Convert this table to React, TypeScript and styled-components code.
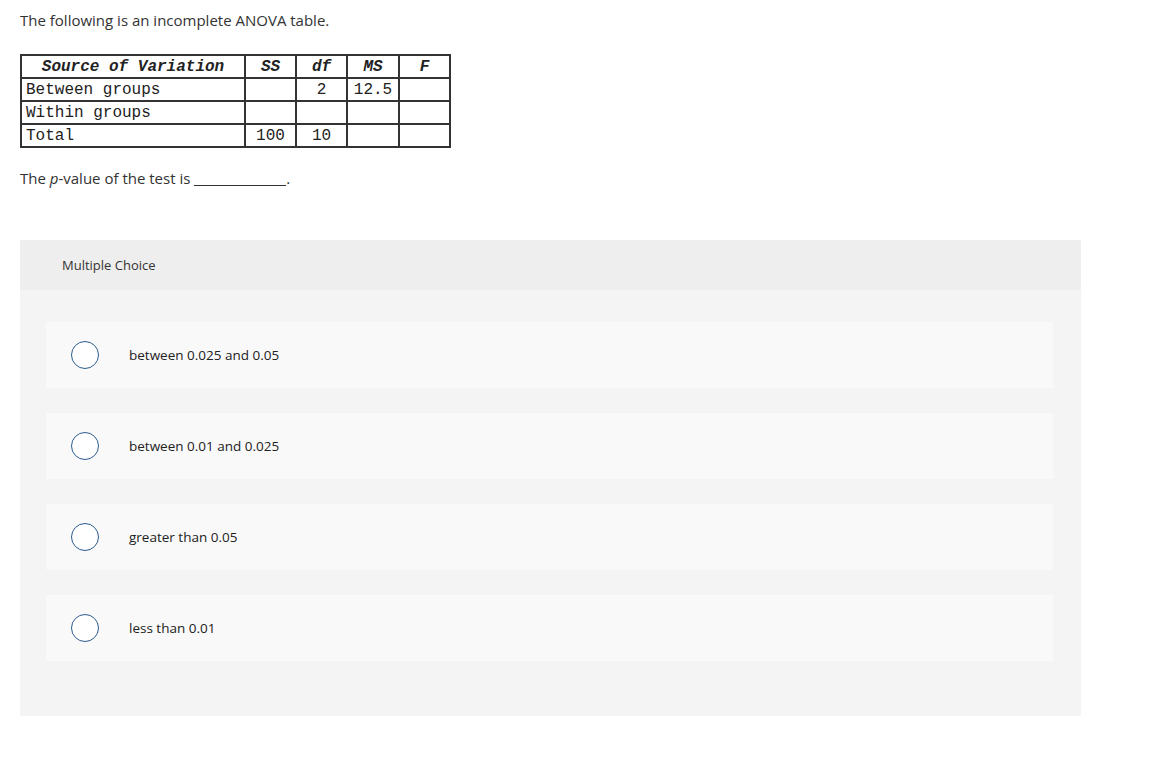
import { createGlobalStyle, styled } from "styled-components";

const GlobalStyle = createGlobalStyle`
    body {
        margin: 0;
        background: #ffffff;
        font-family: "Open Sans", Lato, sans-serif;
        color: #333333;
    }
`

const rows = [
    { source: "Between groups", ss: "", df: "2", ms: "12.5", f: "" },
    { source: "Within groups", ss: "", df: "", ms: "", f: "" },
    { source: "Total", ss: "100", df: "10", ms: "", f: "" },
]

const choices = [
    "between 0.025 and 0.05",
    "between 0.01 and 0.025",
    "greater than 0.05",
    "less than 0.01",
]

export default function App() {
    return (
        <Page>
            <GlobalStyle />
            <Prompt>The following is an incomplete ANOVA table.</Prompt>
            <AnovaTable>
                <thead>
                    <tr>
                        <HeadCell $w={224}>Source of Variation</HeadCell>
                        <HeadCell $w={51}>SS</HeadCell>
                        <HeadCell $w={51}>df</HeadCell>
                        <HeadCell $w={52}>MS</HeadCell>
                        <HeadCell $w={51}>F</HeadCell>
                    </tr>
                </thead>
                <tbody>
                    {rows.map((r) => (
                        <tr key={r.source}>
                            <Cell $left>{r.source}</Cell>
                            <Cell>{r.ss}</Cell>
                            <Cell>{r.df}</Cell>
                            <Cell>{r.ms}</Cell>
                            <Cell>{r.f}</Cell>
                        </tr>
                    ))}
                </tbody>
            </AnovaTable>
            <Question>
                The <em>p</em>-value of the test is <Blank />.
            </Question>
            <Panel>
                <PanelHeader>Multiple Choice</PanelHeader>
                <ChoiceList>
                    {choices.map((c) => (
                        <Choice key={c}>
                            <Radio />
                            <ChoiceText>{c}</ChoiceText>
                        </Choice>
                    ))}
                </ChoiceList>
            </Panel>
        </Page>
    )
}

const Page = styled.div`
    padding: 11px 20px 40px;
    width: 1061px;
`

const Prompt = styled.p`
    margin: 0;
    font-size: 15px;
    line-height: 18px;
`

const AnovaTable = styled.table`
    margin-top: 25px;
    border: 1px solid #333333;
    border-spacing: 0;
    font-family: "Liberation Mono", "Courier New", monospace;
    font-size: 16px;
    color: #222222;
`

const HeadCell = styled.th<{ $w: number }>`
    width: ${(p) => p.$w - 2}px;
    height: 21px;
    padding: 0;
    border: 1px solid #333333;
    font-size: 16px;
    line-height: 20px;
    font-style: italic;
    font-weight: bold;
    text-align: center;
`

const Cell = styled.td<{ $left?: boolean }>`
    height: 21px;
    padding: 0 ${(p) => (p.$left ? "4px" : "0")};
    border: 1px solid #333333;
    line-height: 20px;
    text-align: ${(p) => (p.$left ? "left" : "center")};
`

const Question = styled.p`
    margin: 21px 0 0;
    font-size: 15px;
    line-height: 18px;
`

const Blank = styled.span`
    display: inline-block;
    width: 92px;
    border-bottom: 1px solid #333333;
    vertical-align: -2px;
`

const Panel = styled.div`
    margin-top: 53px;
    background: #f4f4f4;
    border-radius: 2px;
    overflow: hidden;
`

const PanelHeader = styled.div`
    height: 50px;
    display: flex;
    align-items: center;
    padding-left: 42px;
    background: #eeeeee;
    font-size: 13px;
`

const ChoiceList = styled.div`
    display: flex;
    flex-direction: column;
    gap: 25px;
    padding: 32px 28px 55px 26px;
`

const Choice = styled.div`
    height: 66px;
    display: flex;
    align-items: center;
    gap: 30px;
    padding-left: 25px;
    background: #f9f9f9;
    border-radius: 2px;
`

const Radio = styled.span`
    box-sizing: border-box;
    width: 28px;
    height: 28px;
    border: 1.5px solid #2b5b8c;
    border-radius: 50%;
    background: #ffffff;
    flex-shrink: 0;
`

const ChoiceText = styled.span`
    font-size: 13.5px;
    color: #222222;
`
